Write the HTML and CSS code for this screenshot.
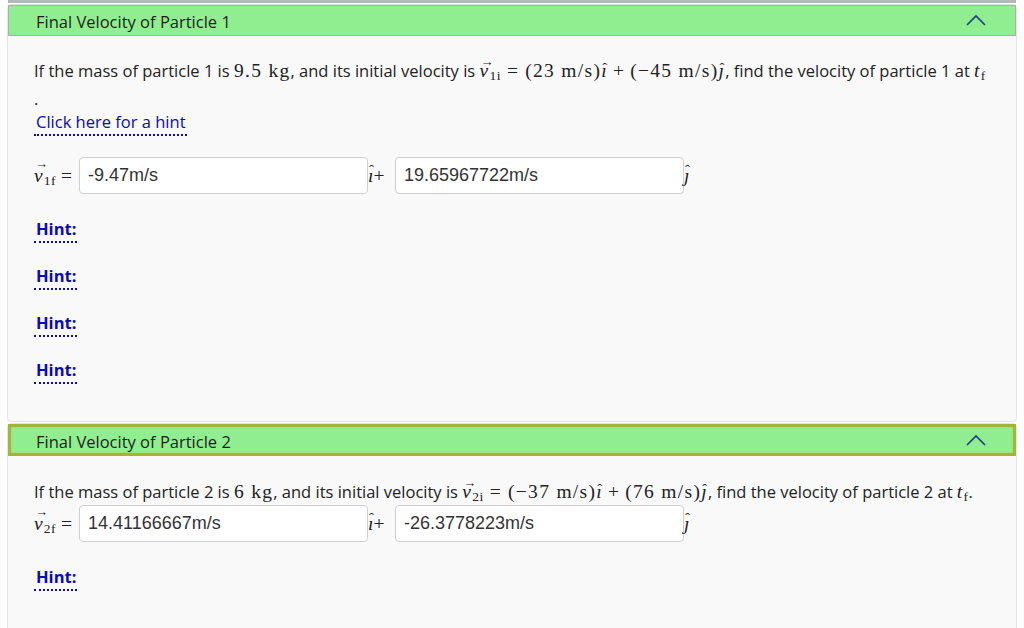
FILE: index.html
```html
<!DOCTYPE html>
<html lang="en">
<head>
<meta charset="utf-8">
<title>Final Velocity</title>
<link rel="stylesheet" href="styles.css">
</head>
<body>
<div class="topbar"></div>
<section class="card">
  <div class="card-head">
    <span class="title">Final Velocity of Particle 1</span>
    <svg class="chev" width="20" height="12" viewBox="0 0 20 12"><path d="M1 11 L10 2 L19 11" fill="none" stroke="#1d3f86" stroke-width="1.6"/></svg>
  </div>
  <div class="card-body">
    <p class="q">If the mass of particle 1 is <span class="m">9.5 kg</span>, and its initial velocity is <span class="m"><span class="vec"><i>v</i></span><sub>1i</sub><span class="rel">=</span>(23 m/s)<span class="hat"><i>ı</i></span><span class="bin">+</span>(−45 m/s)<span class="hat"><i>ȷ</i></span></span>, find the velocity of particle 1 at <span class="m"><i>t</i><sub>f</sub></span><br>.</p>
    <p class="hintline"><a class="link">Click here for a hint</a></p>
    <div class="ansrow">
      <span class="m lbl"><span class="vec"><i>v</i></span><sub>1f</sub><span class="rel">=</span></span>
      <input class="ans" type="text" value="-9.47m/s">
      <span class="m unit"><span class="hat"><i>ı</i></span>+</span>
      <input class="ans" type="text" value="19.65967722m/s">
      <span class="m unit"><span class="hat"><i>ȷ</i></span></span>
    </div>
    <div class="hints">
      <a class="link hint">Hint:</a>
      <a class="link hint">Hint:</a>
      <a class="link hint">Hint:</a>
      <a class="link hint">Hint:</a>
    </div>
  </div>
</section>
<section class="card card2">
  <div class="card-head focused">
    <span class="title">Final Velocity of Particle 2</span>
    <svg class="chev" width="20" height="12" viewBox="0 0 20 12"><path d="M1 11 L10 2 L19 11" fill="none" stroke="#1d3f86" stroke-width="1.6"/></svg>
  </div>
  <div class="card-body body2">
    <p class="q q2">If the mass of particle 2 is <span class="m">6 kg</span>, and its initial velocity is <span class="m"><span class="vec"><i>v</i></span><sub>2i</sub><span class="rel">=</span>(−37 m/s)<span class="hat"><i>ı</i></span><span class="bin">+</span>(76 m/s)<span class="hat"><i>ȷ</i></span></span>, find the velocity of particle 2 at <span class="m"><i>t</i><sub>f</sub></span>.</p>
    <div class="ansrow">
      <span class="m lbl"><span class="vec"><i>v</i></span><sub>2f</sub><span class="rel">=</span></span>
      <input class="ans" type="text" value="14.41166667m/s">
      <span class="m unit"><span class="hat"><i>ı</i></span>+</span>
      <input class="ans" type="text" value="-26.3778223m/s">
      <span class="m unit"><span class="hat"><i>ȷ</i></span></span>
    </div>
    <div class="hints">
      <a class="link hint">Hint:</a>
    </div>
  </div>
</section>
</body>
</html>
```

FILE: styles.css
```css
html, body {
  margin: 0;
  padding: 0;
  background: #ffffff;
}
body {
  font-family: "Open Sans", "Noto Sans", sans-serif;
  font-size: 16.5px;
  color: #222;
  width: 1024px;
  height: 628px;
  overflow: hidden;
}
.topbar {
  height: 3px;
  margin: 0 8px;
  background: #b3bab3;
}
.card {
  margin: 1px 7px 0 7px;
  border: 1px solid #e4e4e4;
  border-radius: 4px;
  background: #f9f9f9;
}
.card2 {
  margin-top: 1px;
}
.card-head {
  height: 29px;
  background: #90ee90;
  border: 1px solid #a8b0a8;
  display: flex;
  align-items: center;
  justify-content: space-between;
  padding: 0 29px 0 27px;
}
.card-head.focused {
  border: 3px solid #a4b43a;
  height: 26px;
  padding: 0 27px 0 25px;
  box-shadow: inset 0 0 2px #b7c440;
}
.title {
  font-size: 16.5px;
  color: #1e1e1e;
  padding-top: 2px;
}
.chev {
  display: block;
  margin-top: -1px;
}
.card-body {
  padding: 21px 26px 37px 26px;
}
.body2 {
  padding-top: 23px;
  padding-bottom: 60px;
}
.q {
  margin: 0;
  line-height: 28px;
}
.q2 {
  line-height: 26px;
}
.m {
  font-family: "Liberation Serif", "DejaVu Serif", serif;
  font-size: 19.5px;
  letter-spacing: 1.3px;
}
.m i {
  font-style: italic;
}
.m sub {
  font-size: 13.5px;
  vertical-align: -3px;
  line-height: 0;
  letter-spacing: 0.5px;
}
.rel {
  padding: 0 6px 0 6px;
}
.bin {
  padding: 0 5px;
}
.vec, .hat {
  position: relative;
  display: inline-block;
}
.vec::before {
  content: "\2192";
  position: absolute;
  left: 1px;
  top: -9px;
  font-size: 13px;
  font-style: normal;
}
.hat::before {
  content: "\02C6";
  position: absolute;
  left: 1px;
  top: -3px;
  font-size: 15px;
  font-style: normal;
}
.hintline {
  margin: -2px 0 0 0;
  line-height: 22px;
}
.link {
  color: #0b0bb5;
  border-bottom: 2px dotted #0b0bb5;
  padding: 0 1px 1px 2px;
  cursor: pointer;
}
.ansrow {
  display: flex;
  align-items: center;
  margin-top: 24px;
  height: 37px;
}
.body2 .ansrow {
  margin-top: 0;
}
.lbl {
  width: 45px;
  white-space: nowrap;
  letter-spacing: 1px;
}
.lbl .rel {
  padding: 0 0 0 5px;
}
.unit {
  width: 27px;
  white-space: nowrap;
  letter-spacing: 0;
}
.ans {
  box-sizing: border-box;
  width: 289px;
  height: 37px;
  border: 1px solid #cfcfcf;
  border-radius: 4px;
  background: #fff;
  padding: 0 8px;
  font-family: "Liberation Sans", Arial, sans-serif;
  font-size: 18px;
  color: #333;
  margin: 0;
}
.hints {
  display: flex;
  flex-direction: column;
  align-items: flex-start;
  gap: 22px;
  margin-top: 24px;
}
.hint {
  font-weight: bold;
  font-size: 16.5px;
  line-height: 22px;
}
```
